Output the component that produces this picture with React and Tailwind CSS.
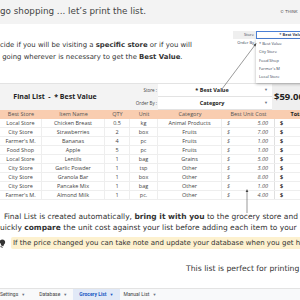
const rows = [
  ["Local Store", "Chicken Breast", "0.5", "kg", "Animal Products", "5.00", "2.50"],
  ["City Store", "Strawberries", "2", "box", "Fruits", "7.00", "14.00"],
  ["Farmer's M.", "Bananas", "4", "pc", "Fruits", "1.00", "4.00"],
  ["Food Shop", "Apple", "5", "pc", "Fruits", "1.00", "5.00"],
  ["Local Store", "Lentils", "1", "bag", "Grains", "5.00", "5.00"],
  ["City Store", "Garlic Powder", "1", "tsp", "Other", "3.00", "3.00"],
  ["City Store", "Granola Bar", "1", "box", "Other", "8.00", "8.00"],
  ["City Store", "Pancake Mix", "1", "bag", "Other", "1.00", "1.00"],
  ["Farmer's M.", "Almond Milk", "1", "pc.", "Other", "4.00", "4.00"],
]

const cols = "grid grid-cols-[42px_63px_25px_28px_64px_53px_45px] w-[320px]"
const prose = { fontFamily: "'DejaVu Sans', 'Liberation Sans', sans-serif" }
const sheet = { fontFamily: "'Open Sans', 'Liberation Sans', sans-serif" }

function Caret() {
  return <span className="text-[4px] text-gray-500">▼</span>
}

function StoreWidget() {
  return (
    <div className="absolute left-[233px] top-[31px] w-[80px] text-[4px] text-gray-700" style={sheet}>
      <div className="flex h-[8px]">
        <div className="w-[23px] bg-[#efefef] flex items-center justify-end pr-[2px]">Store</div>
        <div className="flex-1 border border-[#4a7fd6] bg-white flex items-center justify-center font-bold pl-[14px]">* Best Value</div>
      </div>
      <div className="flex">
        <div className="w-[23px] h-[8px] flex items-center justify-end pr-[2px]">Order By</div>
        <div className="flex-1 bg-white shadow-[0_1px_3px_rgba(0,0,0,0.3)] pl-[3px] pt-[1px] pb-[2px]">
          {["* Best Value", "City Store", "Food Shop", "Farmer's M", "Local Store"].map(s => (
            <div key={s} className="h-[8.3px] flex items-center">{s}</div>
          ))}
        </div>
      </div>
    </div>
  )
}

export default function App() {
  return (
    <div className="relative w-[300px] h-[300px] overflow-hidden bg-white text-[#333]">
      <div className="h-[24px] bg-[#f3f3f3] flex items-center justify-between whitespace-nowrap" style={prose}>
        <span className="text-[8.8px] text-[#444]">go shopping ... let’s print the list.</span>
        <span className="text-[4px] text-[#555] w-[20px] overflow-hidden">© THINK</span>
      </div>

      <div className="h-[59px] pt-[15px] text-[6.9px] leading-[12px] whitespace-nowrap" style={prose}>
        <div>cide if you will be visiting a <b>specific store</b> or if you will</div>
        <div>&nbsp;going wherever is necessary to get the <b>Best Value</b>.</div>
      </div>

      <div className="text-[5.5px] text-[#444]" style={sheet}>
        <div className="flex w-[320px] h-[27px] border-t border-[#e3e3e3]">
          <div className="w-[158px] bg-[#f3f3f3] flex">
            <div className="w-[110px] flex items-center justify-center font-bold text-[7px] text-[#222]">Final List&nbsp; - &nbsp;* Best Value</div>
            <div className="flex-1 flex flex-col text-[4.5px]">
              <div className="flex-1 flex items-center justify-end pr-[1px]">Store :</div>
              <div className="flex-1 flex items-center justify-end pr-[1px]">Order By :</div>
            </div>
          </div>
          <div className="w-[114px] flex flex-col">
            <div className="flex-1 flex items-center border-b border-[#e3e3e3] pl-[2px] pr-[4px]">
              <span className="flex-1 text-center font-bold text-[#222]">* Best Value</span><Caret />
            </div>
            <div className="flex-1 flex items-center border-b border-[#e3e3e3] pl-[2px] pr-[4px]">
              <span className="flex-1 text-center font-bold text-[#222]">Category</span><Caret />
            </div>
          </div>
          <div className="flex-1 bg-[#efefef] flex items-center pl-[2px] font-bold text-[9.5px] text-[#222]">$59.00</div>
        </div>

        <div className={`${cols} h-[9px] bg-[#f9cdb0] text-[#555]`}>
          {["Best Store", "Item Name", "QTY", "Unit", "Category", "Best Unit Cost"].map(h => (
            <div key={h} className="flex items-center justify-center">{h}</div>
          ))}
          <div className="flex items-center justify-center font-bold text-[#222]">Total</div>
        </div>

        {rows.map((r, i) => (
          <div key={i} className={`${cols} h-[9px] border-b border-[#eeeeee]`}>
            <div className="flex items-center justify-center border-r border-[#eeeeee]">{r[0]}</div>
            <div className="flex items-center justify-center border-r border-[#eeeeee]">{r[1]}</div>
            <div className="flex items-center justify-center border-r border-[#eeeeee]">{r[2]}</div>
            <div className="flex items-center justify-center border-r border-[#eeeeee]">{r[3]}</div>
            <div className="flex items-center justify-center border-r border-[#eeeeee]">{r[4]}</div>
            <div className="flex items-center justify-between italic text-[#555] pl-[5px] pr-[6px] border-r border-[#e0e0e0]">
              <span>$</span><span>{r[5]}</span>
            </div>
            <div className="flex items-center justify-between pl-[5px] pr-[3px]">
              <span className="font-bold text-[#222]">$</span><span>{r[6]}</span>
            </div>
          </div>
        ))}
      </div>

      <div className="pt-[11px] text-[7.5px] leading-[11px] whitespace-nowrap" style={prose}>
        <div className="pl-[4px]">Final List is created automatically, <b>bring it with you</b> to the grocery store and</div>
        <div>uickly <b>compare</b> the unit cost against your list before adding each item to your</div>
      </div>

      <div className="mt-[4px] flex items-center h-[12px] whitespace-nowrap" style={prose}>
        <svg width="7" height="9" viewBox="0 0 7 9" className="shrink-0 -ml-[1px]">
          <path d="M1 1.5 Q3.5 -0.5 5.8 1.8 Q6.8 4 5 5.5 L4.3 7.3 L1.8 6.2 L2 4.8 Q-0.2 3.6 1 1.5Z" fill="#333" />
          <path d="M1.6 7 L3.9 8 L3.5 8.8 L1.4 7.9Z" fill="#333" />
        </svg>
        <div className="ml-[5px] flex-1 h-full bg-[#fdf1cf] rounded-[2px] flex items-center pl-[2px] text-[7px] text-[#333]">
          If the price changed you can take note and update your database when you get home
        </div>
      </div>

      <div className="mt-[14px] pl-[186px] text-[7.7px] whitespace-nowrap text-[#333]" style={prose}>
        This list is perfect for printing
      </div>

      <div className="absolute left-0 bottom-0 w-full h-[12px] bg-[#f8f9fa] border-t border-[#e3e3e3] flex items-stretch text-[5px] text-[#444] whitespace-nowrap" style={{ fontFamily: "Roboto, 'Liberation Sans', sans-serif" }}>
        <div className="flex items-center gap-[3px] pr-[8px]">Settings <Caret /></div>
        <div className="flex items-center gap-[3px] px-[6px]">Database <Caret /></div>
        <div className="flex items-center gap-[3px] px-[6px] bg-[#e1e9f7] text-[#1a57c4] font-bold">Grocery List <span className="text-[4px]">▼</span></div>
        <div className="flex items-center gap-[3px] px-[4px]">Manual List <Caret /></div>
      </div>

      <StoreWidget />

      <svg className="absolute left-0 top-0 pointer-events-none" width="300" height="300">
        <line x1="222" y1="89" x2="255" y2="45" stroke="#555" strokeWidth="0.6" />
        <path d="M256.5 43 L253.3 44.9 L255.5 46.5Z" fill="#444" />
        <line x1="247" y1="191" x2="247" y2="213" stroke="#555" strokeWidth="0.6" />
        <path d="M247 189 L245.6 192 L248.4 192Z" fill="#444" />
      </svg>
    </div>
  )
}
